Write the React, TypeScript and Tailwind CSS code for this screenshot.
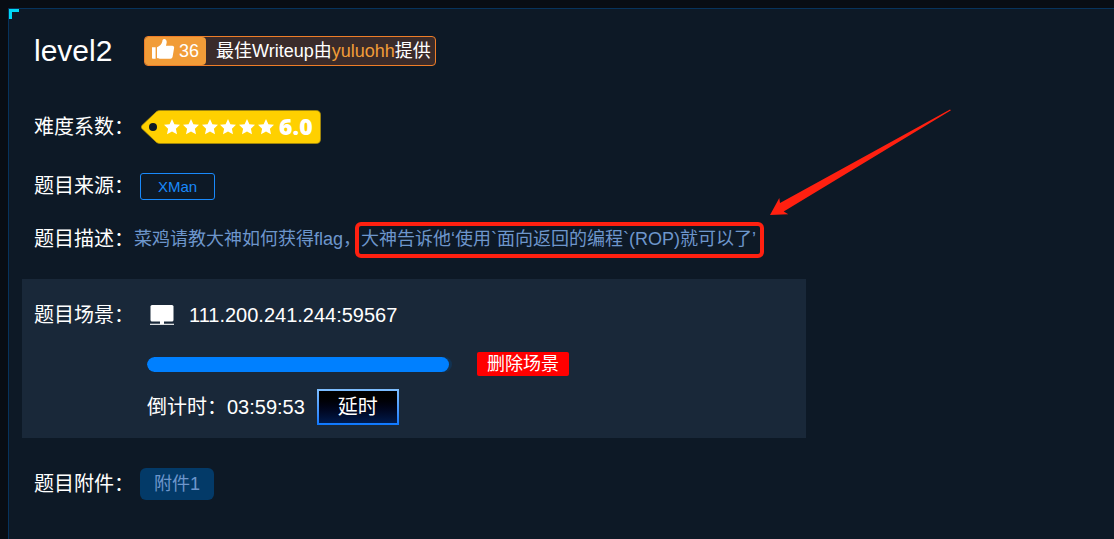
import type { ReactNode } from "react"

const STARS = [31, 50, 69, 87, 106, 125]

const ThumbIcon = () => (
    <svg width="24" height="26" viewBox="0 0 24 26" fill="#fff" aria-hidden="true">
        <path d="M1 9.300h3.600v11.500H1.800a.8.8 0 0 1-.8-.8z" />
        <path d="M6 9.200c2.600-.8 4.900-3 5.300-5.600.1-1.700.6-2.600 1.900-2.600 1.600 0 2.600 1.500 2.500 3.300-.1 1.100-.4 2.300-.8 3.400h6.300c1.500 0 2.100 1 1.900 2.200l-1.500 8.900c-.3 1.300-1 1.900-2.200 1.900H8.600c-.9 0-1.400-.3-2.600-.6z" />
    </svg>
)

const MonitorIcon = () => (
    <svg width="24" height="21" viewBox="0 0 24 21" fill="#fff" aria-hidden="true">
        <rect x="0.500" y="0" width="23" height="16.500" rx="1.500" />
        <path d="M10 16h4v3h-4z" />
        <path d="M0 18.700h24v1.300H0z" opacity="0.850" />
    </svg>
)

// Price-tag shaped rating
const RatingTag = ({ score }: { score: string }) => (
    <svg width="180" height="34" viewBox="0 0 180 34" role="img" aria-label={score}>
        <path
            d="M.8 15.500 15.500 1.600Q17 .5 19 .5H175q4.500 0 4.500 4.500v24q0 4.500-4.500 4.500H19q-2 0-3.500-1.100L.8 18.500q-1-1.500 0-3z"
            fill="#ffd000"
            stroke="#a98d0c"
            strokeWidth="0.700"
        />
        <circle cx="12" cy="17" r="4" fill="#0d1926" />
        {STARS.map((x) => (
            <path
                key={x}
                transform={`translate(${x} 17)`}
                d="M0-8 2.400-2.800 8-2.200 3.900 1.700 5 7.200 0 4.500-5 7.200-3.900 1.700-8-2.200-2.400-2.800z"
                fill="#fff"
            />
        ))}
        <text
            x="138"
            y="25"
            fill="#fff"
            fontSize="23"
            fontWeight="800"
            fontFamily="'Open Sans', 'Noto Sans', sans-serif"
        >
            {score}
        </text>
    </svg>
)

const Row = ({ label, className, children }: { label: string; className: string; children: ReactNode }) => (
    <div className={`flex items-center px-3 ${className}`}>
        <span className="w-[100px] shrink-0 text-xl leading-7">{label}</span>
        {children}
    </div>
)

export default function App() {
    return (
        <div className="min-h-screen overflow-hidden bg-[#080d14] pt-2 pl-2 font-['Liberation_Sans','Noto_Sans_CJK_SC',sans-serif] text-white">
            <main className="relative min-h-[calc(100vh-8px)] border-t border-l border-[#07335c] bg-[#0d1926] px-[13px] pt-[27px] pb-8">
                <span className="absolute top-0 left-0 size-[10px] border-t-3 border-l-3 border-[#00d8f5]" />

                <div className="flex items-center px-3">
                    <h1 className="w-[110px] text-[30px] leading-[30px]">level2</h1>
                    <div className="flex h-[30px] items-center overflow-hidden rounded border border-[#ee7d28] bg-[#3a2b2a] text-lg leading-7">
                        <span className="flex h-full items-center gap-1 rounded-r bg-[#f19c38] pr-[7px] pl-1.5">
                            <ThumbIcon />
                            36
                        </span>
                        <span className="pr-1 pl-[10px] whitespace-nowrap">
                            最佳Writeup由<a href="#yuluohh" className="text-[#f19c38]">yuluohh</a>提供
                        </span>
                    </div>
                </div>

                <Row label="难度系数：" className="mt-11">
                    <span className="ml-[7px]">
                        <RatingTag score="6.0" />
                    </span>
                </Row>

                <Row label="题目来源：" className="mt-7">
                    <a
                        href="#xman"
                        className="ml-1.5 rounded-[3px] border border-[#1989fa] px-[17px] text-[15px] leading-[25px] text-[#1989fa]"
                    >
                        XMan
                    </a>
                </Row>

                <div className="relative mt-[25px]">
                    <Row label="题目描述：" className="">
                        <p className="text-lg leading-7 whitespace-nowrap text-[#6d96cc]">
                            菜鸡请教大神如何获得flag，大神告诉他‘使用`面向返回的编程`(ROP)就可以了’
                        </p>
                    </Row>
                    {/* Hand-drawn marks over the description */}
                    <div className="absolute -top-[3px] left-[333px] h-9 w-[409px] rounded-md border-4 border-[#ff2010]" />
                    <svg className="absolute bottom-9 left-[747px]" width="184" height="110" viewBox="0 0 184 110" aria-hidden="true">
                        <path d="M1 108 10.300 91 11 96 181 2.500l1 .8L14.700 104.500l4.600 2.700z" fill="#ff2010" />
                    </svg>
                </div>

                <section className="mt-[26px] w-full max-w-[784px] bg-[#192839] pt-[22px] pb-[13px]">
                    <Row label="题目场景：" className="">
                        <span className="ml-4 flex items-center gap-[15px] text-xl leading-7">
                            <MonitorIcon />
                            111.200.241.244:59567
                        </span>
                    </Row>
                    <div className="mt-[23px] flex items-center gap-[25px] pl-[125px]">
                        <div
                            role="progressbar"
                            aria-valuenow={99}
                            aria-label="倒计时"
                            className="h-[15px] w-[305px] overflow-hidden rounded-full bg-[#123353]"
                        >
                            <div className="h-full w-[99%] rounded-full bg-[#0080ff]" />
                        </div>
                        <button type="button" className="rounded-xs bg-[#ff0000] px-[10px] text-lg leading-6">
                            删除场景
                        </button>
                    </div>
                    <div className="mt-[13px] flex items-center gap-3 pl-[125px] text-xl leading-7">
                        <span>倒计时：03:59:53</span>
                        <button
                            type="button"
                            className="bg-linear-to-b from-[#7fbfff] to-[#0a78ff] p-0.5 leading-8"
                        >
                            <span className="block bg-linear-to-b from-black to-[#001a4c] px-[19px]">延时</span>
                        </button>
                    </div>
                </section>

                <Row label="题目附件：" className="mt-[30px]">
                    <a href="#attachment" className="ml-1.5 rounded-md bg-[#033a68] px-[14px] text-lg leading-8 text-[#6d96cc]">
                        附件1
                    </a>
                </Row>
            </main>
        </div>
    )
}
